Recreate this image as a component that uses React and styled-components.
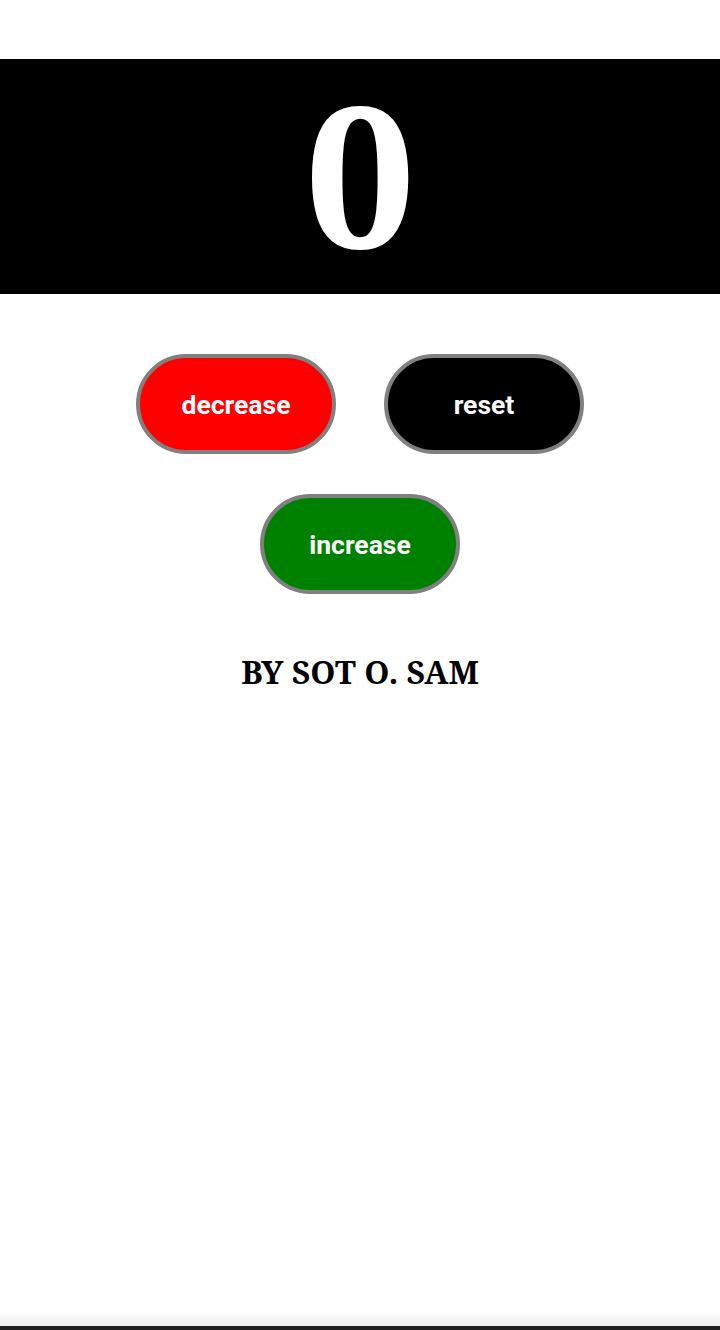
import styled, { createGlobalStyle } from "styled-components";

const GlobalStyle = createGlobalStyle`
  html, body {
    margin: 0;
    padding: 0;
    background: #ffffff;
  }
  body {
    font-family: "Noto Serif", "DejaVu Serif", serif;
  }
`;

const Page = styled.main`
  min-height: 1330px;
  padding-top: 59px;
  box-sizing: border-box;
`;

const Display = styled.section`
  height: 235px;
  background: #000000;
  color: #ffffff;
  display: flex;
  align-items: center;
  justify-content: center;
`;

const Count = styled.span`
  font-family: "Noto Serif", "DejaVu Serif", serif;
  font-weight: 700;
  font-size: 196px;
  line-height: 1;
  margin-top: -10px;
`;

const Controls = styled.div`
  display: flex;
  flex-wrap: wrap;
  justify-content: center;
  column-gap: 48px;
  row-gap: 40px;
  width: 460px;
  margin: 60px auto 0;
`;

const Button = styled.button`
  width: 200px;
  height: 100px;
  border: 4px solid #808080;
  border-radius: 50px;
  background: ${(p) => p.$bg};
  color: #ffffff;
  font-family: Roboto, "Liberation Sans", sans-serif;
  font-weight: 700;
  font-size: 26.5px;
  cursor: pointer;
`;

const Credit = styled.h1`
  margin: 56px 0 0;
  text-align: center;
  font-family: "Noto Serif", "DejaVu Serif", serif;
  font-weight: 700;
  font-size: 32px;
  color: #000000;
`;

const BottomEdge = styled.div`
  position: fixed;
  left: 0;
  right: 0;
  bottom: 0;
  height: 18px;
  background: linear-gradient(to bottom, rgba(0, 0, 0, 0), rgba(0, 0, 0, 0.08) 80%, #1f1f1f 80%);
  pointer-events: none;
`;

export default function App() {
  return (
    <>
      <GlobalStyle />
      <Page>
        <Display>
          <Count>0</Count>
        </Display>
        <Controls>
          <Button $bg="#ff0000">decrease</Button>
          <Button $bg="#000000">reset</Button>
          <Button $bg="#008000">increase</Button>
        </Controls>
        <Credit>BY SOT O. SAM</Credit>
      </Page>
      <BottomEdge />
    </>
  );
}
